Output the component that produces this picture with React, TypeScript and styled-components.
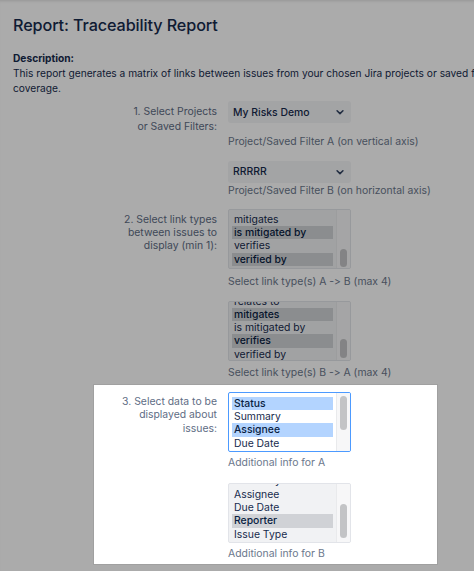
import React from "react";
import styled, { createGlobalStyle } from "styled-components";

const GlobalStyle = createGlobalStyle`
  html, body {
    margin: 0;
    padding: 0;
    background: #fff;
    overflow: hidden;
  }
  body {
    font-family: Inter, "Liberation Sans", sans-serif;
    font-feature-settings: "calt" 0, "liga" 0;
    color: #172b4d;
  }
`;

const ROW = 13.3;

const Page = styled.div`
  width: 560px;
  height: 571px;
  box-sizing: border-box;
  padding: 12px 0 0 13px;
  overflow: hidden;
  box-shadow: inset 0 3px 3px -2px rgba(0, 0, 0, 0.12);
`;

const Title = styled.h1`
  margin: 0;
  font-size: 16.2px;
  font-weight: 500;
  line-height: 26px;
  letter-spacing: -0.1px;
`;

const Description = styled.div`
  margin-top: 12.5px;
  font-size: 10.2px;
  line-height: 15px;
  white-space: nowrap;
`;

const DescLabel = styled.div`
  font-weight: 700;
`;

const Form = styled.div`
  margin: 5.5px 0 0 87px;
  width: 331px;
`;

const Row = styled.div<{ $mt?: number }>`
  display: flex;
  gap: 11px;
  margin-top: ${(p) => p.$mt ?? 0}px;
`;

const Label = styled.div<{ $lh: number; $pt: number }>`
  flex: none;
  width: 117px;
  text-align: right;
  font-size: 10.4px;
  color: #5e6c84;
  line-height: ${(p) => p.$lh}px;
  padding-top: ${(p) => p.$pt}px;
`;

const Field = styled.div`
  flex: 1;
  display: flex;
  flex-direction: column;
  align-items: flex-start;
`;

const Select = styled.div<{ $mt?: number }>`
  width: 123px;
  height: 22px;
  box-sizing: border-box;
  margin-top: ${(p) => p.$mt ?? 0}px;
  padding: 0 6px 0 5px;
  display: flex;
  align-items: center;
  justify-content: space-between;
  background: #f4f5f7;
  border-radius: 3px;
  font-size: 10.4px;
  font-weight: 500;
  color: #172b4d;
`;

const Help = styled.div<{ $mt: number }>`
  margin-top: ${(p) => p.$mt}px;
  font-size: 10.4px;
  line-height: 15px;
  color: #6b778c;
  white-space: nowrap;
`;

const Box = styled.div<{ $focused?: boolean; $mt?: number }>`
  width: 123px;
  height: 60px;
  box-sizing: border-box;
  margin-top: ${(p) => p.$mt ?? 0}px;
  display: flex;
  overflow: hidden;
  border: 1px solid ${(p) => (p.$focused ? "#4c9aff" : "#e2e4e9")};
  border-radius: 2px;
  background: ${(p) => (p.$focused ? "#fff" : "#f1f2f4")};
`;

const Options = styled.div<{ $scroll: number }>`
  flex: 1;
  min-width: 0;
  padding: 4.2px 3px 0 3.4px;
  transform: translateY(-${(p) => p.$scroll}px);
`;

const Option = styled.div<{ $selected: boolean; $focused?: boolean }>`
  height: ${ROW}px;
  line-height: ${ROW}px;
  padding: 0 1.6px;
  font-size: 10.4px;
  white-space: nowrap;
  color: ${(p) => (p.$selected ? "#091e42" : "#172b4d")};
  font-weight: ${(p) => (p.$selected ? 500 : 400)};
  background: ${(p) =>
    p.$selected ? (p.$focused ? "#b3d4ff" : "#d0d2d6") : "transparent"};
`;

const Track = styled.div`
  flex: none;
  width: 14px;
  box-sizing: border-box;
  border-left: 1px solid #e9eaec;
  background: #f7f7f8;
  display: flex;
  justify-content: center;
`;

const Thumb = styled.div<{ $top: number; $h: number }>`
  width: 7.5px;
  height: ${(p) => p.$h}px;
  margin-top: ${(p) => p.$top}px;
  border-radius: 4px;
  background: #c3c4c6;
`;

const Spotlight = styled.div`
  position: relative;
  z-index: 1;
  margin: 4.5px -6px 0;
  padding: 7px 6px 3px;
  background: #fff;
  box-shadow: 0 0 0 1px rgba(0, 0, 0, 0.06), 0 0 0 2000px rgba(0, 0, 0, 0.33);
`;

const Chevron = () => (
  <svg width="10" height="10" viewBox="0 0 24 24">
    <path
      d="M5 9l7 7 7-7"
      fill="none"
      stroke="#344563"
      strokeWidth="3.8"
      strokeLinecap="round"
      strokeLinejoin="round"
    />
  </svg>
);

type ListProps = {
  items: string[];
  selected: string[];
  scroll: number;
  thumbTop: number;
  thumbH: number;
  focused?: boolean;
  mt?: number;
};

const ListBox = ({ items, selected, scroll, thumbTop, thumbH, focused, mt }: ListProps) => (
  <Box $focused={focused} $mt={mt}>
    <Options $scroll={scroll}>
      {items.map((item) => (
        <Option key={item} $selected={selected.includes(item)} $focused={focused}>
          {item}
        </Option>
      ))}
    </Options>
    <Track>
      <Thumb $top={thumbTop} $h={thumbH} />
    </Track>
  </Box>
);

const LINK_TYPES = [
  "blocks",
  "is blocked by",
  "clones",
  "is cloned by",
  "duplicates",
  "is duplicated by",
  "causes",
  "is caused by",
  "relates to",
  "mitigates",
  "is mitigated by",
  "verifies",
  "verified by",
];

const FIELDS = ["Status", "Summary", "Assignee", "Due Date", "Reporter", "Issue Type", "Priority"];

export default function App() {
  return (
    <>
      <GlobalStyle />
      <Page>
        <Title>Report: Traceability Report</Title>
        <Description>
          <DescLabel>Description:</DescLabel>
          This report generates a matrix of links between issues from your chosen Jira projects or saved filters to help you check
          <br />
          coverage.
        </Description>
        <Form>
          <Row>
            <Label $lh={15} $pt={3}>
              1. Select Projects
              <br />
              or Saved Filters:
            </Label>
            <Field>
              <Select>
                My Risks Demo
                <Chevron />
              </Select>
              <Help $mt={10.5}>Project/Saved Filter A (on vertical axis)</Help>
              <Select $mt={12}>
                RRRRR
                <Chevron />
              </Select>
              <Help $mt={0}>Project/Saved Filter B (on horizontal axis)</Help>
            </Field>
          </Row>
          <Row $mt={11.5}>
            <Label $lh={13.4} $pt={3.5}>
              2. Select link types
              <br />
              between issues to
              <br />
              display (min 1):
            </Label>
            <Field>
              <ListBox
                items={LINK_TYPES}
                selected={["is mitigated by", "verified by"]}
                scroll={121}
                thumbTop={38.5}
                thumbH={18}
              />
              <Help $mt={5}>Select link type(s) A -&gt; B (max 4)</Help>
              <ListBox
                mt={12}
                items={LINK_TYPES}
                selected={["mitigates", "verifies"]}
                scroll={118}
                thumbTop={36.5}
                thumbH={19}
              />
              <Help $mt={4}>Select link type(s) B -&gt; A (max 4)</Help>
            </Field>
          </Row>
          <Spotlight>
            <Row>
              <Label $lh={13.4} $pt={3.5}>
                3. Select data to be
                <br />
                displayed about
                <br />
                issues:
              </Label>
              <Field>
                <ListBox
                  focused
                  items={FIELDS}
                  selected={["Status", "Assignee"]}
                  scroll={0}
                  thumbTop={3}
                  thumbH={34}
                />
                <Help $mt={3.5}>Additional info for A</Help>
                <ListBox
                  mt={13}
                  items={FIELDS}
                  selected={["Reporter"]}
                  scroll={27}
                  thumbTop={19.5}
                  thumbH={34}
                />
                <Help $mt={3}>Additional info for B</Help>
              </Field>
            </Row>
          </Spotlight>
        </Form>
      </Page>
    </>
  );
}
